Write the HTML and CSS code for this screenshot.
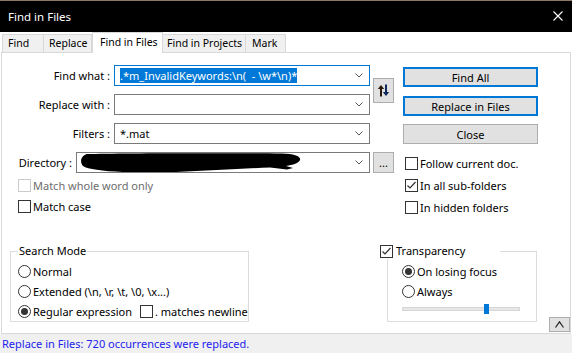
FILE: index.html
```html
<!DOCTYPE html>
<html lang="en">
<head>
<meta charset="UTF-8">
<title>Find in Files</title>
<link rel="stylesheet" href="styles.css">
</head>
<body>

<div class="titlebar">
  <span class="title">Find in Files</span>
  <svg class="close" width="10" height="10" viewBox="0 0 10 10"><path d="M0.5,0.5 L9.5,9.5 M9.5,0.5 L0.5,9.5" stroke="#fff" stroke-width="1.1"/></svg>
</div>

<div class="tabs">
  <div class="tab tab-find">Find</div>
  <div class="tab tab-replace">Replace</div>
  <div class="tab tab-files active">Find in Files</div>
  <div class="tab tab-projects">Find in Projects</div>
  <div class="tab tab-mark">Mark</div>
</div>

<div class="panel">
  <div class="upper">
    <div class="fields">
      <div class="swap-group">
        <div class="rows">
          <div class="row">
            <span class="lbl">Find what :</span>
            <div class="combo focused"><span class="sel">.*m_InvalidKeywords:\n(  - \w*\n)*</span><span class="fill"></span><svg class="chev" width="8" height="5" viewBox="0 0 8 5"><path d="M0.5,0.5 L4,4 L7.5,0.5" fill="none" stroke="#555"/></svg></div>
          </div>
          <div class="row">
            <span class="lbl">Replace with :</span>
            <div class="combo"><span class="fill"></span><svg class="chev" width="8" height="5" viewBox="0 0 8 5"><path d="M0.5,0.5 L4,4 L7.5,0.5" fill="none" stroke="#555"/></svg></div>
          </div>
        </div>
        <div class="sqbtn swap">
          <svg width="13" height="13" viewBox="0 0 13 13">
            <path d="M4,3 L4,12.5" stroke="#2a1a0a" stroke-width="2"/>
            <path d="M0.8,5 L4,1 L7.2,5 Z" fill="#2a1a0a"/>
            <path d="M9,0.5 L9,10" stroke="#0e2a5c" stroke-width="2"/>
            <path d="M5.8,8 L9,12 L12.2,8 Z" fill="#0e2a5c"/>
          </svg>
        </div>
      </div>
      <div class="row spaced">
        <span class="lbl">Filters :</span>
        <div class="combo"><span class="val">*.mat</span><span class="fill"></span><svg class="chev" width="8" height="5" viewBox="0 0 8 5"><path d="M0.5,0.5 L4,4 L7.5,0.5" fill="none" stroke="#555"/></svg></div>
      </div>
      <div class="row spaced">
        <span class="lbl lbl-dir">Directory :</span>
        <div class="combo combo-dir">
          <svg class="blob" width="222" height="20" viewBox="0 0 222 20"><path d="M7,1 C40,0 150,0 202,0.5 C214,1 221,3 220,7 C219,10 213,12 206,13 L213,15 L207,16.5 L190,14.5 C150,16 100,20 60,19.5 C30,19 9,17 3,13 C0,10 0,3 7,1 Z" fill="#000"/></svg>
          <span class="fill"></span>
          <svg class="chev" width="8" height="5" viewBox="0 0 8 5"><path d="M0.5,0.5 L4,4 L7.5,0.5" fill="none" stroke="#555"/></svg>
        </div>
        <div class="sqbtn dots">...</div>
      </div>
      <div class="check first disabled"><span class="box"></span>Match whole word only</div>
      <div class="check"><span class="box"></span>Match case</div>
    </div>

    <div class="side">
      <div class="btn default">Find All</div>
      <div class="btn default second">Replace in Files</div>
      <div class="btn third">Close</div>
      <div class="side-checks">
        <div class="scheck"><span class="box"></span>Follow current doc.</div>
        <div class="scheck"><span class="box checked"><svg width="11" height="11" viewBox="0 0 11 11"><path d="M1.5,5.5 L4,8 L9.5,2" fill="none" stroke="#333" stroke-width="1.2"/></svg></span>In all sub-folders</div>
        <div class="scheck"><span class="box"></span>In hidden folders</div>
      </div>
    </div>
  </div>

  <div class="lower">
    <fieldset class="group search-mode">
      <legend>Search Mode</legend>
      <div class="radio"><span class="dot"></span>Normal</div>
      <div class="radio"><span class="dot"></span>Extended (\n, \r, \t, \0, \x...)</div>
      <div class="radio"><span class="dot on"></span><span class="rx-label">Regular expression</span><span class="box newline-box"></span>. matches newline</div>
    </fieldset>
    <fieldset class="group transparency">
      <legend><span class="box checked"><svg width="11" height="11" viewBox="0 0 11 11"><path d="M1.5,5.5 L4,8 L9.5,2" fill="none" stroke="#333" stroke-width="1.2"/></svg></span>Transparency</legend>
      <div class="radio"><span class="dot on"></span>On losing focus</div>
      <div class="radio"><span class="dot"></span>Always</div>
      <div class="slider"><div class="thumb"></div></div>
    </fieldset>
    <div class="sqbtn collapse"><svg width="9" height="7" viewBox="0 0 9 7"><path d="M0.5,6.5 L4.5,0.8 L8.5,6.5" fill="none" stroke="#222" stroke-width="1.2"/></svg></div>
  </div>
</div>

<div class="status">Replace in Files: 720 occurrences were replaced.</div>

</body>
</html>
```

FILE: styles.css
```css
* {
  box-sizing: border-box;
}
html, body {
  margin: 0;
  overflow: hidden;
}
body {
  width: 572px;
  height: 353px;
  background: #fff;
  font-family: "Noto Sans", "Open Sans", sans-serif;
  font-size: 11px;
  color: #000;
}

/* title bar */
.titlebar {
  height: 32px;
  border-top: 1px solid #8a7a64;
  background: #000;
  color: #fff;
  font-size: 11.5px;
  display: flex;
  align-items: center;
  padding: 0 9px 1px 8px;
}
.title {
  flex: 1;
}

/* tabs */
.tabs {
  display: flex;
  align-items: flex-end;
  height: 20px;
  padding-left: 2px;
}
.tab {
  height: 18px;
  border: 1px solid #d9d9d9;
  border-bottom: none;
  background: #f0f0f0;
  font-size: 10.5px;
  line-height: 16px;
  padding-left: 5px;
  margin-left: -1px;
  white-space: nowrap;
  overflow: hidden;
}
.tab-find { width: 42px; margin-left: 0; }
.tab-replace { width: 49px; }
.tab-files { width: 71px; margin-left: 0; padding-left: 7px; }
.tab-projects { width: 84px; padding-left: 4px; }
.tab-mark { width: 41px; padding-left: 6px; }
.tab.active {
  height: 21px;
  background: #fff;
  margin-bottom: -1px;
  line-height: 19px;
  position: relative;
  z-index: 1;
}

/* tab page */
.panel {
  margin-left: 1px;
  width: 570px;
  height: 282px;
  border: 1px solid #d9d9d9;
  display: flex;
  flex-direction: column;
}
.upper {
  display: flex;
  padding-top: 12px;
}
.fields {
  width: 393px;
}
.swap-group {
  display: flex;
  align-items: center;
}
.rows {
  display: flex;
  flex-direction: column;
  gap: 8px;
}
.row {
  display: flex;
  align-items: center;
  height: 21px;
}
.row.spaced {
  margin-top: 8px;
}
.lbl {
  width: 108px;
  margin-right: 4px;
  text-align: right;
  white-space: nowrap;
}
.lbl-dir {
  width: 70px;
}
.combo {
  width: 256px;
  height: 21px;
  border: 1px solid #7a7a7a;
  display: flex;
  align-items: center;
  padding: 0 6px 0 5px;
  white-space: pre;
  overflow: hidden;
}
.combo.focused {
  border-color: #0078d7;
}
.combo-dir {
  width: 294px;
  padding-left: 3px;
}
.blob {
  flex-shrink: 0;
}
.fill {
  flex: 1;
}
.sel {
  background: #0078d7;
  color: #fff;
  line-height: 15px;
}
.chev {
  flex-shrink: 0;
}

/* small square buttons */
.sqbtn {
  display: flex;
  align-items: center;
  justify-content: center;
  background: #e1e1e1;
  border: 1px solid #adadad;
  flex-shrink: 0;
}
.swap {
  width: 21px;
  height: 25px;
  margin-left: 3px;
}
.dots {
  width: 21px;
  height: 21px;
  margin-left: 3px;
  line-height: 1;
  padding-bottom: 4px;
  align-items: flex-end;
}

/* checkboxes */
.box {
  width: 13px;
  height: 13px;
  border: 1px solid #333;
  background: #fff;
  display: inline-flex;
  align-items: center;
  justify-content: center;
  flex-shrink: 0;
}
.check {
  display: flex;
  align-items: center;
  height: 21px;
  padding-left: 16px;
}
.check.first {
  margin-top: 2px;
}
.check .box,
.scheck .box {
  margin-right: 2px;
}
.check.disabled {
  color: #6d6d6d;
}
.check.disabled .box {
  border-color: #cccccc;
}

/* right column */
.side {
  width: 135px;
  margin-left: 8px;
  padding-top: 2px;
}
.btn {
  height: 20px;
  display: flex;
  align-items: center;
  justify-content: center;
  background: #e1e1e1;
  border: 1px solid #adadad;
}
.btn.default {
  border: 2px solid #0078d7;
}
.btn.second {
  margin-top: 9px;
}
.btn.third {
  margin-top: 8px;
}
.side-checks {
  margin-top: 8px;
}
.scheck {
  display: flex;
  align-items: center;
  height: 22px;
  padding-left: 2px;
}

/* group boxes */
.lower {
  margin-top: auto;
  height: 90px;
  display: flex;
}
.group {
  margin: 0;
  padding: 2px 0 0;
  min-width: 0;
  height: 79px;
  border: 1px solid #dcdcdc;
}
.group legend {
  padding: 0 1px;
  line-height: 16px;
  background: #fff;
}
.search-mode {
  margin-left: 8px;
  width: 239px;
  padding-left: 7px;
}
.search-mode legend {
  margin-left: 0;
}
.transparency {
  margin-left: 138px;
  width: 150px;
  padding-left: 14px;
}
.transparency legend {
  display: flex;
  align-items: center;
  width: 120px;
  margin-left: -22px;
  padding: 0;
}
.transparency legend .box {
  margin-right: 3px;
}
.radio {
  display: flex;
  align-items: center;
  height: 20px;
  white-space: nowrap;
}
.dot {
  width: 13px;
  height: 13px;
  border: 1px solid #333;
  border-radius: 50%;
  margin-right: 2px;
  display: flex;
  align-items: center;
  justify-content: center;
  flex-shrink: 0;
}
.dot.on::after {
  content: "";
  width: 7px;
  height: 7px;
  border-radius: 50%;
  background: #333;
}
.rx-label {
  width: 107px;
}
.newline-box {
  margin-right: 2px;
}
.slider {
  width: 118px;
  height: 4px;
  margin-top: 6px;
  background: #e7e7e7;
  border: 1px solid #d6d6d6;
  display: flex;
  align-items: center;
}
.thumb {
  width: 5px;
  height: 10px;
  margin-left: 81px;
  background: #0078d7;
  flex-shrink: 0;
}
.collapse {
  width: 21px;
  height: 15px;
  margin-left: 12px;
  margin-bottom: 1px;
  align-self: flex-end;
}

/* status bar */
.status {
  height: 19px;
  background: #f0f0f0;
  color: #2222ee;
  padding-left: 2px;
  line-height: 20px;
  font-size: 11px;
  white-space: nowrap;
}
```
